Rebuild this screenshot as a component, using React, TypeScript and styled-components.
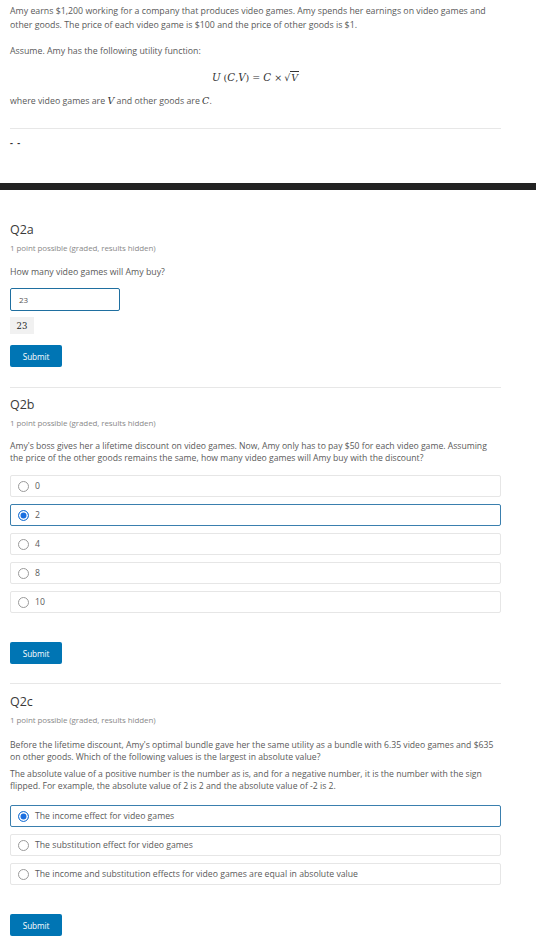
import React from "react";
import styled, { createGlobalStyle } from "styled-components";

const Global = createGlobalStyle`
  html, body { margin: 0; padding: 0; background: #fff; }
  body { font-family: "Open Sans", "Noto Sans", sans-serif; color: #4a4a4a; }
  * { box-sizing: border-box; }
`;

const Page = styled.div`
  width: 536px;
  overflow: hidden;
`;

const Section = styled.section`
  padding: 0 35px 0 10px;
`;

const Para = styled.p<{ $size?: number; $lh?: number; $mt?: number }>`
  margin: ${(p) => p.$mt ?? 0}px 0 0;
  font-size: ${(p) => p.$size ?? 8.8}px;
  line-height: ${(p) => p.$lh ?? 14}px;
  color: #5a5a5a;
`;

const Formula = styled.div`
  margin-top: 11px;
  height: 16px;
  display: flex;
  justify-content: center;
  align-items: center;
  font-family: "DejaVu Serif", "Liberation Serif", serif;
  font-size: 9.5px;
  color: #333;
  white-space: pre;
`;

const MathI = styled.span`
  font-family: "DejaVu Serif", "Liberation Serif", serif;
  font-style: italic;
  color: #333;
  font-size: 1.08em;
`;

const Sqrt = styled.span`
  display: inline-flex;
  align-items: flex-end;
  margin-left: 2px;
`;

const Radicand = styled.span`
  border-top: 1px solid #333;
  padding: 0 1px;
  line-height: 11px;
  font-style: italic;
`;

const Rule = styled.hr<{ $mt: number }>`
  border: 0;
  border-top: 1px solid #e7e7e7;
  margin: ${(p) => p.$mt}px 0 0;
`;

const Dashes = styled.div`
  margin-top: 10px;
  font-size: 9px;
  line-height: 8px;
  color: #333;
  letter-spacing: 1px;
  font-weight: 700;
`;

const DarkBar = styled.div`
  margin-top: 36px;
  height: 7px;
  background: #222;
`;

const Title = styled.h3<{ $mt: number }>`
  margin: ${(p) => p.$mt}px 0 0;
  font-size: 12.5px;
  line-height: 14px;
  font-weight: 400;
  color: #3a3a3a;
`;

const Points = styled.div`
  margin-top: 6px;
  font-size: 8px;
  line-height: 9px;
  color: #8a8a8a;
  letter-spacing: -0.1px;
`;

const Input = styled.div`
  margin-top: 10px;
  width: 110px;
  height: 23px;
  border: 1px solid #1f6fa0;
  border-radius: 2px;
  display: flex;
  align-items: center;
  padding-left: 8px;
  font-size: 8px;
  color: #555;
`;

const Preview = styled.div`
  margin-top: 6px;
  width: 24px;
  height: 17px;
  background: #f1f1f1;
  display: flex;
  align-items: center;
  justify-content: center;
  font-family: "DejaVu Serif", "Liberation Serif", serif;
  font-size: 8.5px;
  color: #222;
`;

const SubmitBtn = styled.button<{ $mt: number }>`
  margin-top: ${(p) => p.$mt}px;
  width: 52px;
  height: 22px;
  border: 0;
  border-radius: 2px;
  background: #0075b4;
  color: #fff;
  font-family: "Open Sans", sans-serif;
  font-size: 8.2px;
  letter-spacing: -0.1px;
  padding: 0;
  display: block;
`;

const Options = styled.div<{ $mt: number }>`
  margin-top: ${(p) => p.$mt}px;
  display: flex;
  flex-direction: column;
  gap: 7px;
`;

const Option = styled.label<{ $selected?: boolean }>`
  height: 22px;
  display: flex;
  align-items: center;
  gap: 6px;
  padding-left: 7px;
  border: 1px solid ${(p) => (p.$selected ? "#3a7fae" : "#e6e6e6")};
  border-radius: 2px;
  font-size: 8.7px;
  color: #5a5a5a;
`;

const Radio = styled.span<{ $checked?: boolean }>`
  width: 11px;
  height: 11px;
  border-radius: 50%;
  border: 1px solid ${(p) => (p.$checked ? "#2a7bd6" : "#9a9a9a")};
  background: ${(p) => (p.$checked ? "#1a6fe0" : "#fff")};
  box-shadow: ${(p) => (p.$checked ? "inset 0 0 0 1.5px #fff" : "none")};
  flex: none;
`;

const OptGroup: React.FC<{ items: string[]; selected: number; mt: number }> = ({ items, selected, mt }) => (
  <Options $mt={mt}>
    {items.map((t, i) => (
      <Option key={t} $selected={i === selected}>
        <Radio $checked={i === selected} />
        <span>{t}</span>
      </Option>
    ))}
  </Options>
);

export default function App() {
  return (
    <Page>
      <Global />
      <Section>
        <Para $mt={4}>
          Amy earns $1,200 working for a company that produces video games. Amy spends her earnings on video games and
          other goods. The price of each video game is $100 and the price of other goods is $1.
        </Para>
        <Para $mt={12}>Assume. Amy has the following utility function:</Para>
        <Formula>
          <MathI>U</MathI> (<MathI>C</MathI>,<MathI>V</MathI>) = <MathI>C</MathI> ×
          <Sqrt>
            √<Radicand>V</Radicand>
          </Sqrt>
        </Formula>
        <Para $mt={9}>
          where video games are <MathI>V</MathI> and other goods are <MathI>C</MathI>.
        </Para>
        <Rule $mt={20} />
        <Dashes>- -</Dashes>
      </Section>
      <DarkBar />
      <Section>
        <Title $mt={33}>Q2a</Title>
        <Points>1 point possible (graded, results hidden)</Points>
        <Para $mt={14} $size={8.8} $lh={12}>How many video games will Amy buy?</Para>
        <Input>23</Input>
        <Preview>23</Preview>
        <SubmitBtn $mt={11}>Submit</SubmitBtn>
        <Rule $mt={20} />
        <Title $mt={10}>Q2b</Title>
        <Points>1 point possible (graded, results hidden)</Points>
        <Para $mt={13} $size={8.65} $lh={12}>
          Amy's boss gives her a lifetime discount on video games. Now, Amy only has to pay $50 for each video game. Assuming
          the price of the other goods remains the same, how many video games will Amy buy with the discount?
        </Para>
        <OptGroup items={["0", "2", "4", "8", "10"]} selected={1} mt={11} />
        <SubmitBtn $mt={29}>Submit</SubmitBtn>
        <Rule $mt={19} />
        <Title $mt={11}>Q2c</Title>
        <Points>1 point possible (graded, results hidden)</Points>
        <Para $mt={15} $size={8.65} $lh={12}>
          Before the lifetime discount, Amy's optimal bundle gave her the same utility as a bundle with 6.35 video games and $635
          on other goods. Which of the following values is the largest in absolute value?
        </Para>
        <Para $mt={5} $size={8.65} $lh={12}>
          The absolute value of a positive number is the number as is, and for a negative number, it is the number with the sign
          flipped. For example, the absolute value of 2 is 2 and the absolute value of -2 is 2.
        </Para>
        <OptGroup
          items={[
            "The income effect for video games",
            "The substitution effect for video games",
            "The income and substitution effects for video games are equal in absolute value",
          ]}
          selected={0}
          mt={13}
        />
        <SubmitBtn $mt={29}>Submit</SubmitBtn>
      </Section>
    </Page>
  );
}
